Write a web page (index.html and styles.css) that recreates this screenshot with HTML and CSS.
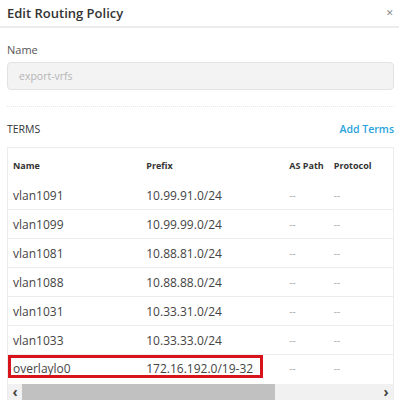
FILE: index.html
```html
<!DOCTYPE html>
<html>
<head>
<meta charset="utf-8">
<link rel="stylesheet" href="styles.css">
</head>
<body>
<div class="modal">
  <div class="header">
    <span class="title">Edit Routing Policy</span>
    <span class="close">&#x2715;</span>
  </div>
  <div class="body">
    <label class="label">Name</label>
    <div class="input">export-vrfs</div>
    <div class="divider"></div>
    <div class="terms-bar">
      <span class="terms">TERMS</span>
      <span class="add">Add Terms</span>
    </div>
    <div class="table-box">
      <div class="row head">
        <div class="c1">Name</div><div class="c2">Prefix</div><div class="c3">AS Path</div><div class="c4">Protocol</div>
      </div>
      <div class="row"><div class="c1">vlan1091</div><div class="c2">10.99.91.0/24</div><div class="c3 dash">--</div><div class="c4 dash">--</div></div>
      <div class="row"><div class="c1">vlan1099</div><div class="c2">10.99.99.0/24</div><div class="c3 dash">--</div><div class="c4 dash">--</div></div>
      <div class="row"><div class="c1">vlan1081</div><div class="c2">10.88.81.0/24</div><div class="c3 dash">--</div><div class="c4 dash">--</div></div>
      <div class="row"><div class="c1">vlan1088</div><div class="c2">10.88.88.0/24</div><div class="c3 dash">--</div><div class="c4 dash">--</div></div>
      <div class="row"><div class="c1">vlan1031</div><div class="c2">10.33.31.0/24</div><div class="c3 dash">--</div><div class="c4 dash">--</div></div>
      <div class="row"><div class="c1">vlan1033</div><div class="c2">10.33.33.0/24</div><div class="c3 dash">--</div><div class="c4 dash">--</div></div>
      <div class="row last">
        <div class="highlight"></div>
        <div class="c1">overlaylo0</div><div class="c2">172.16.192.0/19-32</div><div class="c3 dash">--</div><div class="c4 dash">--</div>
      </div>
      <div class="scrollbar">
        <span class="arrow">&#x2039;</span>
        <div class="track"><div class="thumb"></div></div>
        <span class="arrow">&#x203A;</span>
      </div>
    </div>
  </div>
</div>
</body>
</html>
```

FILE: styles.css
```css
* { box-sizing: border-box; }
html, body { margin: 0; padding: 0; background: #fff; }
body { font-family: "Open Sans", "Liberation Sans", sans-serif; color: #333; }
.modal { width: 399px; height: 407px; background: #fff; }
.header {
  height: 28px;
  border-bottom: 2px solid #ececec;
  display: flex;
  justify-content: space-between;
  align-items: flex-start;
  padding: 2px 5px 0 7px;
}
.title { font-size: 13px; font-weight: 600; color: #333; line-height: 22px; }
.close { font-size: 9px; color: #888; line-height: 18px; margin-top: 2px; }
.body { padding: 0 5px 0 7px; }
.label { display: block; font-size: 11px; color: #555; margin-top: 14px; line-height: 16px; }
.input {
  margin-top: 4px;
  height: 28px;
  border: 1px solid #e2e2e2;
  border-radius: 4px;
  background: #f3f3f4;
  color: #b5b5b5;
  font-size: 10.5px;
  padding: 0 11px;
  line-height: 26px;
}
.divider { margin-top: 16px; border-top: 1px dotted #e6e6e6; }
.terms-bar {
  display: flex;
  justify-content: space-between;
  align-items: center;
  height: 18px;
  margin-top: 13px;
}
.terms { font-size: 10.5px; color: #333; }
.add { font-size: 10.5px; color: #2aa3db; font-weight: 600; }
.table-box {
  margin-top: 9px;
  border: 1px solid #ececec;
  border-bottom: none;
  overflow: hidden;
}
.row {
  position: relative;
  display: flex;
  align-items: center;
  height: 29px;
  border-bottom: 1px solid #ececec;
  font-size: 12px;
  color: #444;
  white-space: nowrap;
}
.row.head { height: 33px; padding-top: 2px; font-size: 9px; font-weight: 700; color: #333; border-bottom: none; }
.row.last { border-bottom: none; padding-bottom: 3px; }
.c1 { width: 140px; padding-left: 5px; }
.c2 { width: 145px; }
.c3 { width: 45px; }
.c4 { width: 60px; }
.dash { color: #aaa; font-size: 10px; }
.highlight {
  position: absolute;
  left: 0; top: 0;
  width: 255px; height: 23px;
  border: 3px solid #d7131b;
}
.scrollbar {
  display: flex;
  align-items: center;
  height: 16px;
  background: #f1f1f1;
}
.arrow { width: 14px; text-align: center; font-size: 14px; font-weight: 700; color: #444; line-height: 16px; }
.track { flex: 1; height: 16px; }
.thumb { width: 253px; height: 16px; background: #c1c1c1; }
```
